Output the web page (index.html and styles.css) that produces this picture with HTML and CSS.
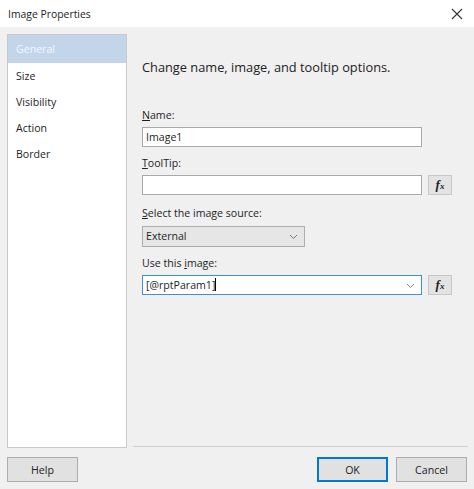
FILE: index.html
```html
<!DOCTYPE html>
<html lang="en">
<head>
  <meta charset="UTF-8">
  <title>Image Properties</title>
  <link rel="stylesheet" href="styles.css">
</head>
<body>
  <div class="titlebar">
    <span class="title">Image Properties</span>
    <span class="close">
      <svg width="12" height="12" viewBox="0 0 12 12"><path d="M1 1 L11 11 M11 1 L1 11" stroke="#333" stroke-width="1.1" fill="none"/></svg>
    </span>
  </div>
  <div class="main">
    <ul class="nav">
      <li class="selected">General</li>
      <li>Size</li>
      <li>Visibility</li>
      <li>Action</li>
      <li>Border</li>
    </ul>
    <div class="content">
      <h2>Change name, image, and tooltip options.</h2>

      <label class="lbl first"><u>N</u>ame:</label>
      <div class="row">
        <div class="textbox">Image1</div>
      </div>

      <label class="lbl"><u>T</u>oolTip:</label>
      <div class="row">
        <div class="textbox"></div>
        <button class="fx"><i>f</i><span>x</span></button>
      </div>

      <label class="lbl spaced"><u>S</u>elect the image source:</label>
      <div class="row">
        <div class="dropdown">External
          <svg class="chev" width="9" height="6" viewBox="0 0 9 6"><path d="M1 1 L4.5 4.5 L8 1" stroke="#777" stroke-width="1" fill="none"/></svg>
        </div>
      </div>

      <label class="lbl">Use this <u>i</u>mage:</label>
      <div class="row">
        <div class="textbox combo">[@rptParam1]<span class="caret"></span>
          <svg class="chev" width="9" height="6" viewBox="0 0 9 6"><path d="M1 1 L4.5 4.5 L8 1" stroke="#888" stroke-width="1" fill="none"/></svg>
        </div>
        <button class="fx"><i>f</i><span>x</span></button>
      </div>

      <div class="separator"></div>
    </div>
  </div>
  <div class="footer">
    <button class="btn">Help</button>
    <div class="spacer"></div>
    <button class="btn default">OK</button>
    <button class="btn">Cancel</button>
  </div>
</body>
</html>
```

FILE: styles.css
```css
body {
  margin: 0;
  width: 474px;
  height: 489px;
  background: #f0f0f0;
  font-family: "Open Sans", "Noto Sans", sans-serif;
  font-size: 10.6px;
  color: #1e1e1e;
  overflow: hidden;
}
.titlebar {
  height: 27px;
  background: #fff;
  display: flex;
  align-items: center;
  justify-content: space-between;
  padding: 0 9px 0 8px;
}
.title { font-size: 10.4px; color: #222; }
.close { display: flex; padding-right: 2px; }

.main {
  display: flex;
  padding: 7px 6px 0 7px;
  height: 414px;
}
.nav {
  list-style: none;
  margin: 0;
  padding: 0;
  width: 118px;
  height: 412px;
  background: #fff;
  border: 1px solid #c9c9c9;
}
.nav li {
  height: 26px;
  line-height: 26px;
  padding-left: 8px;
}
.nav li.selected {
  height: 28px;
  line-height: 28px;
  background: #c3d5e9;
  color: #f4f8fc;
}

.content {
  flex: 1;
  display: flex;
  flex-direction: column;
  padding-left: 15px;
}
h2 {
  margin: 23px 0 0 0;
  font-weight: normal;
  font-size: 12.8px;
  line-height: 20px;
  color: #222;
}
.lbl {
  display: block;
  line-height: 16px;
  margin-top: 8px;
  margin-bottom: 4px;
}
.lbl.first { margin-top: 30px; }
.lbl.spaced { margin-top: 10px; margin-bottom: 5px; }
.row {
  display: flex;
  align-items: center;
  gap: 6px;
}
.textbox {
  box-sizing: border-box;
  width: 280px;
  height: 20px;
  background: #fff;
  border: 1px solid #a9a9a9;
  padding-left: 3px;
  line-height: 18px;
  position: relative;
}
.dropdown {
  box-sizing: border-box;
  width: 163px;
  height: 21px;
  background: #e6e6e6;
  border: 1px solid #adadad;
  padding-left: 3px;
  line-height: 19px;
  position: relative;
}
.chev {
  position: absolute;
  right: 6px;
  top: 7px;
}
.combo { border-color: #3c8fd8; }
.caret {
  display: inline-block;
  width: 1px;
  height: 13px;
  background: #000;
  vertical-align: -2px;
}
.fx {
  box-sizing: border-box;
  width: 24px;
  height: 20px;
  padding: 0;
  background: #e3e3e3;
  border: 1px solid #c8c8c8;
  font-family: "Liberation Serif", serif;
  font-weight: bold;
  font-size: 13px;
  color: #222;
  line-height: 16px;
}
.fx span { font-size: 9px; font-style: italic; }
.separator {
  margin-top: auto;
  margin-left: -9px;
  border-top: 1px solid #d0d0d0;
  height: 0;
  margin-bottom: 1px;
}

.footer {
  display: flex;
  padding: 9px 7px 0 7px;
  gap: 8px;
}
.spacer { flex: 1; }
.btn {
  box-sizing: border-box;
  width: 71px;
  height: 25px;
  background: #e1e1e1;
  border: 1px solid #adadad;
  font-family: "Open Sans", "Noto Sans", sans-serif;
  font-size: 10.6px;
  color: #222;
  padding: 0;
}
.btn.default {
  border: 1px solid #0078d7;
  box-shadow: inset 0 0 0 1px #0078d7;
}
```
